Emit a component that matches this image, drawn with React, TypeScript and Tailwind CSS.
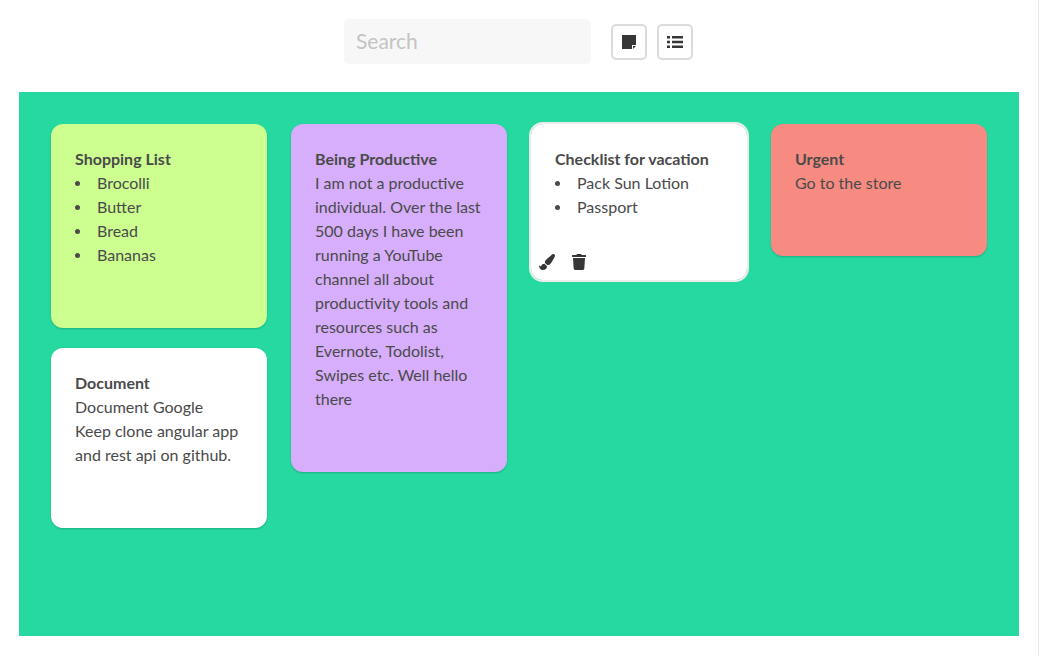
import { FaPaintBrush, FaTrash } from 'react-icons/fa';

type Note = {
  title: string;
  text?: string;
  items?: string[];
  color: string;
  active?: boolean;
};

const columns: Note[][] = [
  [
    { title: 'Shopping List', items: ['Brocolli', 'Butter', 'Bread', 'Bananas'], color: 'bg-[#ccff90]' },
    { title: 'Document', text: 'Document Google Keep clone angular app and rest api on github.', color: 'bg-white' },
  ],
  [
    {
      title: 'Being Productive',
      text: 'I am not a productive individual. Over the last 500 days I have been running a YouTube channel all about productivity tools and resources such as Evernote, Todolist, Swipes etc. Well hello there',
      color: 'bg-[#d7aefb]',
    },
  ],
  [{ title: 'Checklist for vacation', items: ['Pack Sun Lotion', 'Passport'], color: 'bg-white', active: true }],
  [{ title: 'Urgent', text: 'Go to the store', color: 'bg-[#f78b82]' }],
];

function NoteCard({ note }: { note: Note }) {
  return (
    <div
      className={`relative w-[216px] rounded-xl pt-[23px] pr-6 pb-[61px] pl-6 text-base leading-6 text-[#4a4a4a] ${note.color} ${
        note.active ? 'outline-2 outline-[#ececec]' : 'shadow-[0_1px_2px_rgba(0,0,0,0.2)]'
      }`}
    >
      <div className="font-bold">{note.title}</div>
      {note.text && <div>{note.text}</div>}
      {note.items && (
        <ul className="list-none">
          {note.items.map((item) => (
            <li key={item} className="flex items-center">
              <span className="mr-[17px] size-[5px] rounded-full bg-[#4a4a4a]" />
              {item}
            </li>
          ))}
        </ul>
      )}
      {note.active && (
        <div className="absolute bottom-[10px] left-2 flex items-center gap-4 text-[#363636]">
          <FaPaintBrush className="size-4" />
          <FaTrash className="size-4" />
        </div>
      )}
    </div>
  );
}

export default function App() {
  return (
    <div className="flex min-h-[656px] bg-white font-['Lato','Noto_Sans',sans-serif]">
      <div className="w-[1038px]">
        <div className="flex items-center justify-center gap-5 pt-[19px] pr-px pb-7">
          <input
            placeholder="Search"
            className="h-[45px] w-[247px] rounded-[5px] bg-[#f7f7f7] px-3 pb-0.5 text-[21px] text-[#4a4a4a] placeholder:text-[#c4c4c4] focus:outline-none"
          />
          <div className="flex items-center gap-2.5">
            <button className="flex size-9 items-center justify-center rounded-[5px] border-2 border-[#dbdbdb] text-[#363636]">
              <svg viewBox="0 0 14 14" className="size-[14px]" fill="currentColor">
                <path d="M0 0h14v10h-4v4H0z" />
                <path d="M11 11h3l-3 3z" />
              </svg>
            </button>
            <button className="flex size-9 items-center justify-center rounded-[5px] border-2 border-[#dbdbdb] text-[#363636]">
              <svg viewBox="0 0 16 12" className="h-3 w-4" fill="currentColor">
                <path d="M0 0h3v2.5H0zM5 0h11v2.5H5zM0 4.75h3v2.5H0zM5 4.75h11v2.5H5zM0 9.5h3V12H0zM5 9.5h11V12H5z" />
              </svg>
            </button>
          </div>
        </div>
        <div className="mx-[19px] flex h-[544px] w-[1000px] gap-6 bg-[#26d9a0] p-8">
          {columns.map((notes, i) => (
            <div key={i} className="flex flex-col gap-5">
              {notes.map((note) => (
                <NoteCard key={note.title} note={note} />
              ))}
            </div>
          ))}
        </div>
      </div>
      <div className="w-px bg-[#ececec]" />
    </div>
  );
}
